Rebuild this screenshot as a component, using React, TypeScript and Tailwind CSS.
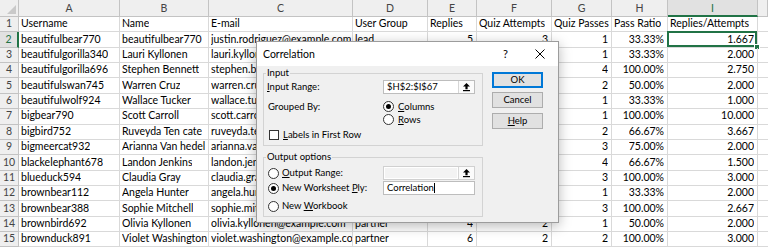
import React from "react";

const data: string[][] = [
  ["Username", "Name", "E-mail", "User Group", "Replies", "Quiz Attempts", "Quiz Passes", "Pass Ratio", "Replies/Attempts"],
  ["beautifulbear770", "beautifulbear770", "justin.rodriguez@example.com", "lead", "5", "3", "1", "33.33%", "1.667"],
  ["beautifulgorilla340", "Lauri Kyllonen", "lauri.kyllonen@example.com", "member", "6", "3", "1", "33.33%", "2.000"],
  ["beautifulgorilla696", "Stephen Bennett", "stephen.bennett@example.com", "member", "11", "4", "4", "100.00%", "2.750"],
  ["beautifulswan745", "Warren Cruz", "warren.cruz@example.com", "member", "8", "4", "2", "50.00%", "2.000"],
  ["beautifulwolf924", "Wallace Tucker", "wallace.tucker@example.com", "partner", "3", "3", "1", "33.33%", "1.000"],
  ["bigbear790", "Scott Carroll", "scott.carroll@example.com", "member", "10", "1", "1", "100.00%", "10.000"],
  ["bigbird752", "Ruveyda Ten cate", "ruveyda.tencate@example.com", "member", "11", "3", "2", "66.67%", "3.667"],
  ["bigmeercat932", "Arianna Van hedel", "arianna.vanhedel@example.com", "partner", "8", "4", "3", "75.00%", "2.000"],
  ["blackelephant678", "Landon Jenkins", "landon.jenkins@example.com", "member", "9", "6", "4", "66.67%", "1.500"],
  ["blueduck594", "Claudia Gray", "claudia.gray@example.com", "lead", "9", "3", "3", "100.00%", "3.000"],
  ["brownbear112", "Angela Hunter", "angela.hunter@example.com", "member", "6", "3", "1", "33.33%", "2.000"],
  ["brownbear388", "Sophie Mitchell", "sophie.mitchell@example.com", "member", "8", "3", "3", "100.00%", "2.667"],
  ["brownbird692", "Olivia Kyllonen", "olivia.kyllonen@example.com", "partner", "4", "2", "1", "50.00%", "2.000"],
  ["brownduck891", "Violet Washington", "violet.washington@example.com", "partner", "6", "2", "2", "100.00%", "3.000"],
];

const letters = ["A", "B", "C", "D", "E", "F", "G", "H", "I", ""];

function RefIcon() {
  return (
    <svg width="9" height="10" viewBox="0 0 9 10">
      <path d="M4.5 1 L8 4.6 H5.6 V7.2 H3.4 V4.6 H1 Z" fill="#000" />
      <rect x="1" y="8" width="7" height="1.2" fill="#000" />
    </svg>
  );
}

function Radio({ checked }: { checked?: boolean }) {
  return (
    <span className="w-[11px] h-[11px] rounded-full border border-[#333333] bg-white flex items-center justify-center shrink-0">
      {checked && <span className="w-[5px] h-[5px] rounded-full bg-[#000000]" />}
    </span>
  );
}

function Dialog() {
  return (
    <div className="absolute left-[256px] top-[41px] w-[303px] h-[182px] bg-[#f0f0f0] border border-[#9c9c9c] shadow-[0_3px_12px_rgba(0,0,0,0.28)] flex flex-col font-['Lato',sans-serif] text-[9.5px] leading-[12px] text-black">
      <div className="h-[24px] bg-white flex items-center pl-[6px] shrink-0">
        <span className="text-[10.5px]">Correlation</span>
        <span className="ml-auto mr-[27px] text-[11px]">?</span>
        <svg width="10" height="10" viewBox="0 0 10 10" className="mr-[13px]">
          <path d="M0.5 0.5 L9.5 9.5 M9.5 0.5 L0.5 9.5" stroke="#000" strokeWidth="1" />
        </svg>
      </div>
      <div className="flex pl-[6px] pt-[7px]">
        <div className="flex flex-col w-[220px]">
          <div className="h-[73px] border border-[#d3d3d3] flex flex-col">
            <div className="-mt-[7px] ml-[2px] px-[1px] h-[12px] bg-[#f0f0f0] self-start">Input</div>
            <div className="mt-[1px] h-[14px] flex items-center">
              <div className="w-[119px] pl-[3px]">
                <span className="underline">I</span>nput Range:
              </div>
              <div className="w-[92px] h-[14px] bg-white border border-[#bdbdbd] flex">
                <div className="flex-1 pl-[3px]">$H$2:$I$67</div>
                <div className="w-[16px] border-l border-[#d6d6d6] bg-[#fbfbfb] flex items-center justify-center">
                  <RefIcon />
                </div>
              </div>
            </div>
            <div className="mt-[6px] h-[13px] flex items-center">
              <div className="w-[119px] pl-[4px]">Grouped By:</div>
              <Radio checked />
              <span className="ml-[4px]">
                <span className="underline">C</span>olumns
              </span>
            </div>
            <div className="h-[13px] flex items-center">
              <div className="w-[119px]" />
              <Radio />
              <span className="ml-[4px]">
                <span className="underline">R</span>ows
              </span>
            </div>
            <div className="mt-[2px] h-[13px] flex items-center pl-[5px]">
              <span className="w-[10px] h-[10px] border border-[#333333] bg-white shrink-0" />
              <span className="ml-[4px]">
                <span className="underline">L</span>abels in First Row
              </span>
            </div>
          </div>
          <div className="mt-[11px] h-[60px] border border-[#d3d3d3] flex flex-col">
            <div className="-mt-[7px] ml-[2px] px-[1px] h-[12px] bg-[#f0f0f0] self-start">Output options</div>
            <div className="mt-[3px] h-[14px] flex items-center">
              <div className="w-[119px] pl-[4px] flex items-center">
                <Radio />
                <span className="ml-[3px]">
                  <span className="underline">O</span>utput Range:
                </span>
              </div>
              <div className="w-[92px] h-[14px] bg-[#f3f3f3] border border-[#d0d0d0] flex">
                <div className="flex-1 border border-white" />
                <div className="w-[16px] border-l border-[#d6d6d6] bg-[#fbfbfb] flex items-center justify-center">
                  <RefIcon />
                </div>
              </div>
            </div>
            <div className="mt-[1px] h-[14px] flex items-center">
              <div className="w-[119px] pl-[4px] flex items-center">
                <Radio checked />
                <span className="ml-[3px]">
                  New Worksheet <span className="underline">P</span>ly:
                </span>
              </div>
              <div className="w-[92px] h-[14px] bg-white border border-[#bdbdbd] flex items-center pl-[3px]">
                <span>Correlation</span>
                <span className="w-px h-[10px] bg-black" />
              </div>
            </div>
            <div className="mt-[4px] h-[14px] flex items-center pl-[4px]">
              <Radio />
              <span className="ml-[3px]">
                New <span className="underline">W</span>orkbook
              </span>
            </div>
          </div>
        </div>
        <div className="ml-[9px] -mt-[1px] flex flex-col w-[51px]">
          <div className="h-[16px] bg-[#e1e1e1] border border-[#0078d7] shadow-[inset_0_0_0_1px_#0078d7] flex items-center justify-center">OK</div>
          <div className="mt-[4px] h-[16px] bg-[#e1e1e1] border border-[#adadad] flex items-center justify-center">Cancel</div>
          <div className="mt-[5px] h-[16px] bg-[#e1e1e1] border border-[#adadad] flex items-center justify-center">
            <span>
              <span className="underline">H</span>elp
            </span>
          </div>
        </div>
      </div>
    </div>
  );
}

export default function App() {
  return (
    <div className="relative w-[768px] h-[248px] overflow-hidden bg-white font-['Lato',sans-serif] text-[10.5px] text-black">
      <div className="grid grid-cols-[19px_101px_89px_144px_75px_49px_75px_60px_56px_90px_1fr] grid-rows-[17px_repeat(15,15.36px)]">
        <div className="bg-[#efefef] border-r border-b border-[#c3c3c3] flex items-end justify-end pr-[2px] pb-[2px]">
          <svg width="9" height="9" viewBox="0 0 9 9">
            <path d="M9 0 L9 9 L0 9 Z" fill="#c9c9c9" />
          </svg>
        </div>
        {letters.map((l, i) =>
          i === 8 ? (
            <div key={i} className="bg-[#e1e1e1] border-r border-b-2 border-r-[#c3c3c3] border-b-[#217346] text-center text-[#217346] leading-[16px]">
              {l}
            </div>
          ) : (
            <div key={i} className="bg-[#efefef] border-r border-b border-[#c3c3c3] text-center text-[#444444] leading-[16px]">
              {l}
            </div>
          )
        )}
        {data.map((row, ri) => (
          <React.Fragment key={ri}>
            {ri === 1 ? (
              <div className="bg-[#e1e1e1] border-r-2 border-b border-r-[#217346] border-b-[#c3c3c3] text-center text-[#217346] flex items-center justify-center">
                {ri + 1}
              </div>
            ) : (
              <div className="bg-[#efefef] border-r border-b border-[#c3c3c3] text-center text-[#444444] flex items-center justify-center">
                {ri + 1}
              </div>
            )}
            {row.map((v, ci) => {
              const right = ri > 0 && ci >= 4;
              const sel = ri === 1 && ci === 8;
              return (
                <div
                  key={ci}
                  className={
                    "relative min-w-0 border-r border-b border-[#d9d9d9] whitespace-nowrap flex items-center " +
                    (right ? "justify-end pr-[3px]" : "justify-start pl-[2px]")
                  }
                >
                  <span className="overflow-hidden block">{v}</span>
                  {sel && (
                    <>
                      <div className="absolute -left-[1px] -top-[1px] right-0 bottom-0 border-2 border-[#217346]" />
                      <div className="absolute -right-[3px] -bottom-[3px] w-[6px] h-[6px] bg-[#217346] border border-white" />
                    </>
                  )}
                </div>
              );
            })}
            <div className="border-b border-[#d9d9d9]" />
          </React.Fragment>
        ))}
      </div>
      <Dialog />
    </div>
  );
}
